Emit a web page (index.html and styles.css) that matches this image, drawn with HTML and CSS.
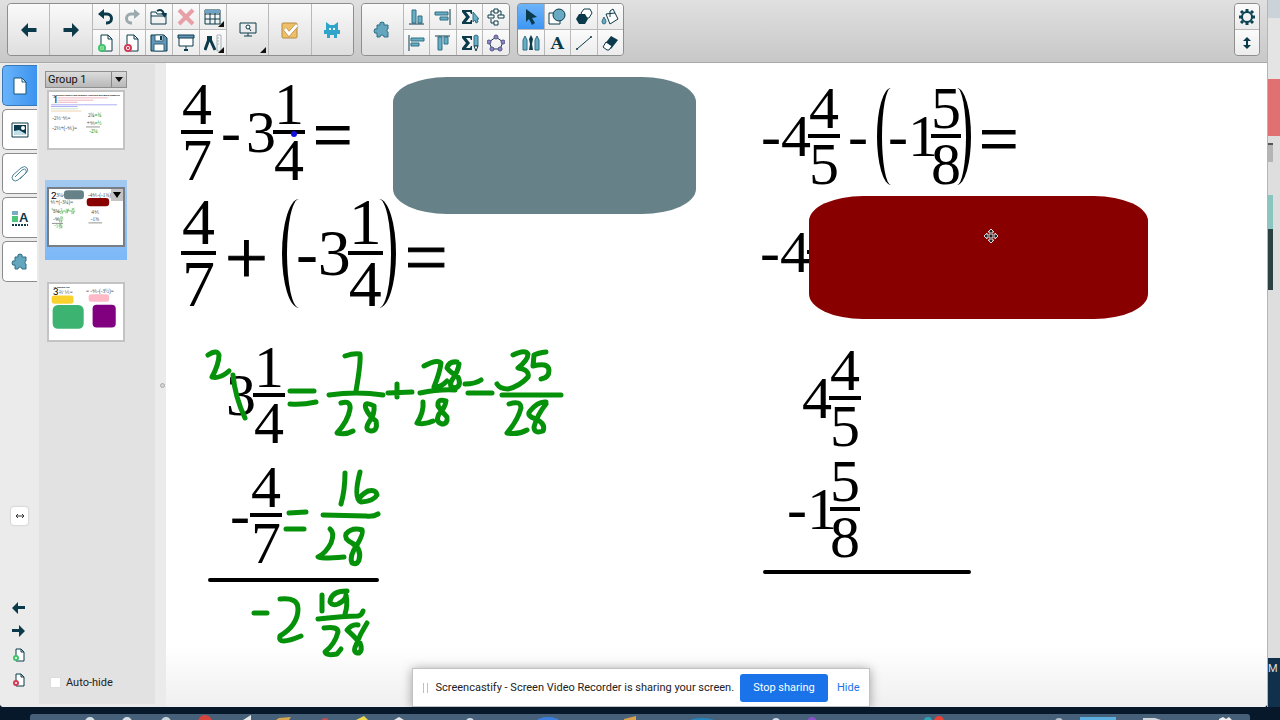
FILE: index.html
```html
<!doctype html>
<html lang="en">
<head>
  <meta charset="utf-8">
  <title>Mixed numbers</title>
  <link rel="stylesheet" href="styles.css">
</head>
<body>
<div class="window">

	<header class="toolbar">
		<div class="tools tools-main">
			<button class="tool tall" aria-label="Previous page"><svg width="18" height="16" viewBox="0 0 18 16"><path class="dark" d="M1 8l7-7v5h8.500v4H8v5z"/></svg></button>
			<button class="tool tall" aria-label="Next page"><svg width="18" height="16" viewBox="0 0 18 16"><path class="dark" d="M17 8l-7-7v5H1.500v4H10v5z"/></svg></button>
			<button class="tool" aria-label="Undo"><svg width="18" height="18" viewBox="0 0 18 18"><path d="M6 6h4a4 4 0 0 1 0 9H9" fill="none" stroke="#0b3a4a" stroke-width="3"/><path class="dark" d="M1 6l6-5v10z"/></svg></button>
			<button class="tool" aria-label="Redo"><svg width="18" height="18" viewBox="0 0 18 18"><path d="M12 6H8a4 4 0 0 0 0 9h1" fill="none" stroke="#9aa9ad" stroke-width="3"/><path d="M17 6l-6-5v10z" fill="#9aa9ad"/></svg></button>
			<button class="tool" aria-label="Open"><svg width="18" height="18" viewBox="0 0 18 18"><path class="line" d="M1 16V4h5l1 2h9v10zM1 8h13"/><path d="M7 3q5-3 7 3" fill="none" stroke="#0b3a4a" stroke-width="2"/><path class="dark" d="M11 5h6l-2 5z"/></svg></button>
			<button class="tool" aria-label="Delete"><svg width="18" height="18" viewBox="0 0 18 18"><path d="M2 2l14 14M16 2L2 16" stroke="#e8a0a8" stroke-width="4"/></svg></button>
			<button class="tool more" aria-label="Table"><svg width="18" height="18" viewBox="0 0 18 18"><path class="line" d="M1 2h15v14H1zM1 6h15M1 11h15M6 2v14M11 2v14"/><path d="M1 2h15v3H1z" fill="#6fa3c8"/></svg></button>
			<button class="tool tall more" aria-label="Display"><svg width="18" height="16" viewBox="0 0 18 16"><path class="line" d="M1 1h16v10H1zM9 11v3M5 14h8"/><circle cx="9" cy="5" r="2" fill="#fff" stroke="#0b3a4a"/><path class="line" d="M10 6l2 3"/></svg></button>
			<button class="tool tall" aria-label="Response"><svg width="18" height="18" viewBox="0 0 18 18"><rect x="1" y="2" width="15" height="15" rx="1" fill="#edbf68" stroke="#b78c42"/><path d="M4 8l4 5 8-9" fill="none" stroke="#a67b36" stroke-width="4"/><path d="M4 8l4 5 8-9" fill="none" stroke="#fff" stroke-width="3"/></svg></button>
			<button class="tool tall" aria-label="Activity lab"><svg width="18" height="16" viewBox="0 0 18 16"><path fill="#31a5c9" d="M3 0l4 3h4l4-3v8h2v4h-3v4h-3v-3H7v3H4v-4H1V8h2z"/><path fill="#e6f6fa" d="M6 6h2v2H6zM10 6h2v2h-2z"/></svg></button>
			<button class="tool" aria-label="Add page"><svg width="16" height="18" viewBox="0 0 16 18"><path class="line white" d="M3 1h7l4 4v12H3zM10 1v4h4"/><circle cx="4" cy="14" r="3" fill="#fff" stroke="#3fc46a" stroke-width="2"/><path d="M4 12v4M2 14h4" stroke="#3fc46a"/></svg></button>
			<button class="tool" aria-label="Delete page"><svg width="16" height="18" viewBox="0 0 16 18"><path class="line white" d="M3 1h7l4 4v12H3zM10 1v4h4"/><circle cx="4" cy="14" r="3" fill="#fff" stroke="#d23a56" stroke-width="2"/><path d="M3 13l2 2M5 13l-2 2" stroke="#d23a56"/></svg></button>
			<button class="tool" aria-label="Save"><svg width="18" height="18" viewBox="0 0 18 18"><path d="M1 1h13l3 3v13H1z" fill="#6597b9" stroke="#0b3a4a"/><path d="M5 1h8v6H5zM4 10h10v7H4z" fill="#fff" stroke="#34627a"/><path class="dark" d="M10 2h2v4h-2z"/></svg></button>
			<button class="tool" aria-label="Screen shade"><svg width="18" height="18" viewBox="0 0 18 18"><path class="line white" d="M2 3h14v9H2zM9 12v4"/><path d="M1 1h16v3H1z" fill="#6597b9" stroke="#0b3a4a"/><path class="dark" d="M7 15h4v2H7z"/></svg></button>
			<button class="tool more" aria-label="Measurement tools"><svg width="18" height="18" viewBox="0 0 18 18"><path d="M1 16L5 5M11 16L6 5" stroke="#0b3a4a" stroke-width="3"/><path class="dark" d="M3 2h5v5H3z"/><path d="M13 1h4v16h-4zM13 4h2M13 7h2M13 10h2" fill="none" stroke="#a9b4b8"/></svg></button>
		</div>

		<div class="tools tools-math">
			<button class="tool tall" aria-label="Add-ons"><svg width="18" height="17" viewBox="0 0 18 17"><use href="#puzzle"/></svg></button>
			<button class="tool" aria-label="Align bottom"><svg width="18" height="18" viewBox="0 0 18 18"><path class="blue" d="M4 2h4v13H4zM10 8h4v7h-4z"/><path class="line" d="M1 16h15"/></svg></button>
			<button class="tool" aria-label="Align right"><svg width="18" height="18" viewBox="0 0 18 18"><path class="blue" d="M1 4h13v3H1zM6 9h8v3H6z"/><path class="line" d="M16 1v16"/></svg></button>
			<button class="tool" aria-label="Select equation"><svg width="18" height="18" viewBox="0 0 18 18"><use href="#sigma"/><path class="blue" d="M12 4v10l2-2 1 3 2-1-1-3h2z"/></svg></button>
			<button class="tool" aria-label="Concept map"><svg width="18" height="18" viewBox="0 0 18 18"><path class="line" d="M7 3H4v4M11 3h3v4M7 15H4v-4"/><path class="line white" d="M7 1h4v4H7zM1 7h6v3H1zM11 7h6v3h-6zM7 13h4v4H7z"/></svg></button>
			<button class="tool" aria-label="Align left"><svg width="18" height="18" viewBox="0 0 18 18"><path class="blue" d="M3 4h13v3H3zM3 9h8v3H3z"/><path class="line" d="M1 1v16"/></svg></button>
			<button class="tool" aria-label="Align top"><svg width="18" height="18" viewBox="0 0 18 18"><path class="blue" d="M4 3h4v13H4zM10 3h4v7h-4z"/><path class="line" d="M1 2h15"/></svg></button>
			<button class="tool" aria-label="Write equation"><svg width="18" height="18" viewBox="0 0 18 18"><use href="#sigma"/><path class="blue" d="M13 2q2-2 4 0v10h-4z"/><path class="line white" d="M13 12h4l-2 5z"/></svg></button>
			<button class="tool" aria-label="Polygon"><svg width="18" height="18" viewBox="0 0 18 18"><path class="line" d="M9 3l7 5-3 7H5L2 8z"/><g fill="#8d83bf" stroke="#5c5390"><circle cx="9" cy="3" r="2"/><circle cx="16" cy="8" r="2"/><circle cx="13" cy="15" r="2"/><circle cx="5" cy="15" r="2"/><circle cx="2" cy="8" r="2"/></g></svg></button>
		</div>

		<div class="tools tools-draw">
			<button class="tool selected" aria-label="Select"><svg width="18" height="18" viewBox="0 0 18 18"><path class="dark" d="M4 1l11 8-5 1 3 5-3 2-3-6-3 3z"/></svg></button>
			<button class="tool" aria-label="Shapes"><svg width="18" height="18" viewBox="0 0 18 18"><path class="line white" d="M1 5h11v11H1z"/><circle cx="11" cy="7" r="6" fill="#6aa9c4" stroke="#0b3a4a"/></svg></button>
			<button class="tool" aria-label="Regular polygons"><svg width="18" height="18" viewBox="0 0 18 18"><path class="line white" d="M9 1h6l2 4-3 5H9L6 5z"/><path class="dark" d="M4 6h6l3 5-3 5H4l-3-5z"/></svg></button>
			<button class="tool" aria-label="Fill"><svg width="18" height="18" viewBox="0 0 18 18"><path class="line white" d="M5 6l9-1 3 6-8 5z"/><path class="line" d="M9 9V3l3-2 2 4"/><path class="blue" d="M3 9l2 4q0 3-2 3t-2-3z"/></svg></button>
			<button class="tool" aria-label="Pens"><svg width="18" height="18" viewBox="0 0 18 18"><path class="blue" d="M1 6l2-4 2 4v10H1zM13 6l2-4 2 4v10h-4z"/><path class="dark" d="M7 5l2-4 2 4-1 5 1 6H7l1-6z"/></svg></button>
			<button class="tool letter" aria-label="Text">A</button>
			<button class="tool" aria-label="Line"><svg width="18" height="18" viewBox="0 0 18 18"><path class="line" d="M2 15L16 3"/><circle class="dark" cx="2" cy="15" r="1"/><circle class="dark" cx="16" cy="3" r="1"/></svg></button>
			<button class="tool" aria-label="Eraser"><svg width="18" height="18" viewBox="0 0 18 18"><path class="dark" d="M10 2l7 4-7 9-7-4z"/><path class="line white" d="M5 8l6 4-3 4H6l-4-3z"/></svg></button>
		</div>

		<div class="tools tools-end">
			<button class="tool" aria-label="Settings"><svg width="18" height="18" viewBox="0 0 18 18"><circle cx="9" cy="9" r="5" fill="none" stroke="#0c4454" stroke-width="2"/><path d="M9 1v3M9 14v3M1 9h3M14 9h3M3 3l2 2M13 13l2 2M15 3l-2 2M5 13l-2 2" stroke="#0c4454" stroke-width="3"/></svg></button>
			<button class="tool" aria-label="Move toolbar"><svg width="10" height="14" viewBox="0 0 10 14"><path class="dark" d="M5 1l4 4H6v4h3l-4 4-4-4h3V5H1z"/></svg></button>
		</div>
	</header>

	<div class="workspace">
		<nav class="rail">
			<button class="tab selected" aria-label="Page sorter"><svg width="14" height="18" viewBox="0 0 14 18"><path d="M1 1h8l4 4v12H1z" fill="#fff" stroke="#125777"/><path d="M9 1v4h4" fill="none" stroke="#125777"/></svg></button>
			<button class="tab" aria-label="Gallery"><svg width="18" height="18" viewBox="0 0 18 18"><path d="M1 2h16v14H1z" fill="#fff" stroke="#0b3a4a"/><path class="dark" d="M3 4h12v10H3z"/><path d="M3 10l5-1 7 4v1H3z" fill="#bfe0e8"/><circle cx="12" cy="7" r="2" fill="#fff"/></svg></button>
			<button class="tab" aria-label="Attachments"><svg width="18" height="18" viewBox="0 0 18 18"><path d="M4 12l7-7q3-2 4 0t-1 4l-7 6q-3 2-5 0t0-5l8-7q4-3 6 0 2 2-1 5l-6 6" fill="none" stroke="#4c8596"/></svg></button>
			<button class="tab" aria-label="Properties"><svg width="18" height="18" viewBox="0 0 18 18"><path fill="#79adc5" d="M1 2h6v4H1z"/><path fill="#4dc67c" d="M1 7h6v6H1z"/><text class="tab-letter" x="8" y="13">A</text><path d="M1 16h16" stroke="#0b3a4a" stroke-width="2" stroke-dasharray="2 1"/></svg></button>
			<button class="tab" aria-label="Add-ons"><svg width="18" height="17" viewBox="0 0 18 17"><use href="#puzzle"/></svg></button>
			<button class="collapse" aria-label="Resize"><svg width="10" height="6" viewBox="0 0 10 6"><path d="M2 3h6M3 1L1 3l2 2M7 1l2 2-2 2" fill="none" stroke="#333"/></svg></button>
			<div class="page-buttons">
				<button aria-label="Back"><svg width="14" height="12" viewBox="0 0 14 12"><path class="dark" d="M0 6l6-6v4h7v3H6v5z"/></svg></button>
				<button aria-label="Forward"><svg width="14" height="12" viewBox="0 0 14 12"><path class="dark" d="M13 6L7 0v4H0v3h7v5z"/></svg></button>
				<button aria-label="Insert page"><svg width="12" height="14" viewBox="0 0 12 14"><path class="line white" d="M3 1h5l3 3v9H3zM8 1v3h3"/><circle cx="3" cy="10" r="2" fill="#fff" stroke="#3fc46a" stroke-width="2"/></svg></button>
				<button aria-label="Remove page"><svg width="12" height="14" viewBox="0 0 12 14"><path class="line white" d="M3 1h5l3 3v9H3zM8 1v3h3"/><circle cx="3" cy="10" r="2" fill="#fff" stroke="#d23a56" stroke-width="2"/></svg></button>
			</div>
		</nav>

		<aside class="sorter">
			<div class="group-picker">
				<select id="group" aria-label="Group">
					<option>Group 1</option>
				</select>
			</div>

			<div class="page">
				<svg class="thumb" viewBox="0 0 1120 840">
					<text class="thumb-title" x="40" y="54">4.3 Turning Positive and Negative Fractions and Mixed Numbers</text>
					<g stroke-width="9">
						<path d="M130 85h760M130 120h540M130 152h300" stroke="#e48294"/>
						<path d="M30 190h1000M30 216h400" stroke="#7777ee"/>
						<path d="M30 250h410" stroke="#9fd6a5"/><path d="M30 284h460" stroke="#e3b27b"/>
					</g>
					<text class="thumb-math" x="50" y="420">-2⅓·⅘=</text>
					<text class="thumb-math" x="50" y="570">-2⅓+(-⅘)=</text>
					<text class="thumb-math" x="590" y="370">2¾</text>
					<text class="thumb-math" x="570" y="490">+⅘</text>
					<path d="M560 525h210" stroke="#333" stroke-width="8"/>
					<text class="thumb-ink" x="690" y="370">=¾</text>
					<text class="thumb-ink" x="690" y="490">=½</text>
					<text class="thumb-ink" x="610" y="615">-2¼</text>
					<text class="thumb-number" x="56" y="170">1</text>
				</svg>
			</div>

			<div class="page current">
				<svg class="thumb" viewBox="0 0 1120 840">
					<text class="thumb-math" x="110" y="110">3¼=</text>
					<text class="thumb-math" x="20" y="225">⅘+(-3¼)=</text>
					<rect x="227" y="14" width="302" height="137" rx="50" fill="#668288"/>
					<text class="thumb-math" x="590" y="110">-4⅘-(-1⅝)=</text>
					<rect x="571" y="134" width="340" height="123" rx="50" fill="#880000"/>
					<use href="#strokes"/>
					<text class="thumb-math" x="62" y="360">3¼</text>
					<text class="thumb-math" x="62" y="480">-⅘</text>
					<text class="thumb-math" x="640" y="370">4⅘</text>
					<text class="thumb-math" x="630" y="485">-1⅝</text>
					<path d="M43 517h170M597 509h207" stroke="#333" stroke-width="8"/>
					<text class="thumb-number" x="30" y="150">2</text>
				</svg>
				<button class="page-menu" aria-label="Page menu"><svg width="8" height="6" viewBox="0 0 8 6"><path d="M0 0h8L4 6z"/></svg></button>
			</div>

			<div class="page">
				<svg class="thumb" viewBox="0 0 1120 840">
					<text class="thumb-title" x="60" y="54">4.3 Turning Pos.</text>
					<text class="thumb-math" x="150" y="140">⅔·⅕=</text>
					<text class="thumb-math" x="560" y="130">= -⅘-(-3½)=</text>
					<rect x="40" y="170" width="330" height="125" rx="36" fill="#f9d22f"/>
					<rect x="600" y="150" width="310" height="115" rx="36" fill="#ffb9c7"/>
					<rect x="55" y="315" width="470" height="360" rx="80" fill="#3cb371"/>
					<rect x="660" y="310" width="350" height="345" rx="60" fill="#800080"/>
					<text class="thumb-number" x="60" y="170">3</text>
				</svg>
			</div>

			<label class="auto-hide"><input type="checkbox"> Auto-hide</label>
		</aside>

		<div class="splitter"><span class="grip"></span></div>

		<main class="canvas">
			<div class="eq first-problem">
				<span class="frac"><span>4</span><span>7</span></span>
				<span class="minus">-</span>
				<span>3</span><span class="frac mixed"><span>1</span><span>4</span></span>
				<span class="op">=</span>
			</div>

			<div class="eq big first-rewrite">
				<span class="frac"><span>4</span><span>7</span></span>
				<span class="op">+</span>
				<span class="paren open"></span><span>-3</span><span class="frac mixed"><span>1</span><span>4</span></span><span class="paren close"></span>
				<span class="op">=</span>
			</div>

			<div class="eq first-top"><span>3</span><span class="frac mixed"><span>1</span><span>4</span></span></div>
			<div class="eq first-bottom"><span>-</span><span class="frac"><span>4</span><span>7</span></span></div>
			<div class="sum-line first-line"></div>

			<div class="eq second-problem">
				<span>-4</span><span class="frac mixed"><span>4</span><span>5</span></span>
				<span class="minus">-</span>
				<span class="paren open"></span><span>-1</span><span class="frac after-one"><span>5</span><span>8</span></span><span class="paren close"></span>
				<span class="op">=</span>
			</div>

			<div class="eq second-rewrite"><span>-4</span><span class="frac mixed"><span>4</span><span>5</span></span></div>
			<div class="eq second-top"><span>4</span><span class="frac mixed"><span>4</span><span>5</span></span></div>
			<div class="eq second-bottom"><span>-1</span><span class="frac after-one"><span>5</span><span>8</span></span></div>
			<div class="sum-line second-line"></div>

			<div class="cover cover-gray"></div>
			<div class="cover cover-red"></div>

			<svg class="ink">
				<g id="strokes" transform="translate(-166 -63)">
					<circle class="dot" cx="294" cy="134" r="3"/>
					<!-- borrow -->
					<path d="M208 355Q217 349 219 355Q219 364 212 377Q220 379 229 371M233 375Q235 397 245 418"/>
					<path d="M290 391H314M290 404Q302 405 316 402"/>
					<!-- 7/28 -->
					<path d="M345 356Q354 353 360 354Q361 362 356 391M329 395Q357 391 383 395"/>
					<path d="M341 403Q351 400 350 409Q348 421 337 433Q346 435 353 431M374 406Q363 400 366 409Q369 416 376 421Q378 431 371 431Q364 430 369 422Q375 414 374 406"/>
					<path d="M388 393L412 392M397 384V397"/>
					<!-- 28/28 -->
					<path d="M424 366Q437 359 441 363Q440 372 434 387Q440 388 447 381M457 362Q449 361 447 368Q450 372 458 377Q462 386 455 388Q448 387 452 380Q458 372 459 364M420 393Q440 389 455 390"/>
					<path d="M423 402Q424 412 417 423Q425 425 433 421M446 401Q437 398 438 406Q442 412 447 417Q448 424 442 424Q435 422 439 414Q445 408 446 401"/>
					<path d="M465 384Q475 384 481 380M468 393H492"/>
					<!-- 35/28 -->
					<path d="M513 355Q525 349 528 354Q528 360 518 368Q530 370 528 377Q520 386 508 389Q500 389 497 384M546 352Q538 353 534 355L533 366Q548 362 549 370Q549 378 541 379M502 395H561"/>
					<path d="M509 404Q521 400 521 408Q518 420 507 433Q518 435 527 430M546 402Q538 401 530 411Q526 416 536 419Q546 424 543 431Q534 434 534 427Q537 415 546 404"/>
					<!-- 16/28 -->
					<path d="M289 513L306 512M286 529H304"/>
					<path d="M345 473Q345 490 341 504M360 472Q353 499 361 502Q374 501 377 495Q376 489 368 491Q361 495 359 499M323 515L366 516Q373 517 378 514"/>
					<path d="M330 529Q335 533 331 543Q326 553 318 557Q319 559 344 557M362 530Q352 527 346 534Q344 539 352 543Q362 549 359 560Q357 565 352 563Q349 556 357 545Q364 533 362 530"/>
					<!-- answer -->
					<path d="M254 613H267M280 599Q298 597 298 609Q298 625 280 636Q277 646 301 636"/>
					<path d="M322 595V611M347 591Q331 591 330 602Q332 606 338 604Q346 600 346 595Q348 605 345 614M318 619Q345 616 358 616Q362 615 363 611"/>
					<path d="M324 628Q338 626 338 632Q335 644 325 652Q326 656 337 654L341 649M367 623Q360 634 356 645Q352 653 359 653Q363 650 360 643Q352 634 347 630Q352 624 358 625"/>
				</g>
			</svg>

			<svg class="pointer" width="16" height="16" viewBox="0 0 16 16"><path d="M8 1l3 3H9v3h3V5l3 3-3 3V9H9v3h2l-3 3-3-3h2V9H4v2L1 8l3-3v2h3V4H5z" fill="#222" stroke="#ddd"/></svg>
		</main>
	</div>

	<div class="share-bar">
		<span class="drag"></span>
		<span class="share-text">Screencastify - Screen Video Recorder is sharing your screen.</span>
		<button class="stop">Stop sharing</button>
		<a class="hide" href="#">Hide</a>
	</div>
</div>

<div class="behind">
	<span class="behind-title"></span>
	<span class="behind-bar"></span>
	<span class="behind-red"></span>
	<span class="behind-gap"></span>
	<span class="behind-scroll"></span>
	<span class="behind-gap tall-gap"></span>
	<span class="behind-teal"></span>
	<span class="behind-dark"></span>
	<span class="behind-page"></span>
	<span class="behind-desktop">M</span>
</div>

<div class="dock">
	<svg width="100%" height="6">
		<circle cx="60" cy="8" r="5" fill="#d7dfe6"/><circle cx="97" cy="8" r="5" fill="#d7dfe6"/><circle cx="136" cy="8" r="5" fill="#c9d3da"/>
		<circle cx="175" cy="8" r="7" fill="#d6443c"/><path d="M213 6l8-5v5z" fill="#e8e8e8"/><path d="M246 6l3-2 12-1-2 3z" fill="#d8a64c"/>
		<circle cx="295" cy="8" r="4" fill="#c24d58"/><path d="M326 6l8-4 4 4z" fill="#f0d84c"/><path d="M364 6l5-3 5 3z" fill="#e8e8e8"/>
		<circle cx="440" cy="8" r="4" fill="#d7dfe6"/><ellipse cx="518" cy="8" rx="12" ry="5" fill="#3d7fe0"/><path d="M594 5l12-3v4h-12z" fill="#d9a24b"/>
		<ellipse cx="672" cy="8" rx="14" ry="4" fill="#2386c0"/><circle cx="746" cy="8" r="4" fill="#d7dfe6"/><circle cx="782" cy="8" r="5" fill="#8a52c8"/>
		<circle cx="898" cy="7" r="4" fill="#2aa5b8"/><circle cx="909" cy="7" r="5" fill="#ea4336"/><circle cx="1029" cy="8" r="4" fill="#b9c4cc"/>
		<rect x="1050" y="3" width="36" height="3" fill="#5bafdf"/><path d="M1113 4h12l6 2h-18z" fill="#d0d6da"/><path d="M1189 5l4-2 3 2 3-2 3 3h-13z" fill="#f0f0f0"/>
	</svg>
</div>

<svg class="symbols">
	<symbol id="puzzle" viewBox="0 0 18 17"><path d="M7 4q-1-3 2-3t2 3h4v4q-1 0-1 1.500T15 11v5h-4q0-2-2-2t-2 2H4v-4q-3 1-3-2t3-2V4z" fill="#63a6be" stroke="#2f6f86"/></symbol>
	<symbol id="sigma" viewBox="0 0 18 18"><path d="M1 2h10v4h-1l-1-2H5l4 5-4 5h4l1-2h1v4H1v-2l4-5-4-5z" fill="#0b3a4a"/></symbol>
</svg>
</body>
</html>
```

FILE: styles.css
```css
*,
*:before,
*:after {
	box-sizing: border-box;
}

body {
	display: grid;
	grid-template-columns: 1fr 13px;
	grid-template-rows: 1fr 13px;
	height: 100vh;
	margin: 0;
	overflow: hidden;
	background: #06182a;
	font-family: Roboto, "Liberation Sans", sans-serif;
	font-size: 11px;
	color: #222;
}

button {
	padding: 0;
	border: none;
	background: none;
	font-family: inherit;
	font-size: inherit;
}

svg {
	display: block;
}

.symbols {
	position: absolute;
	width: 0;
	height: 0;
}

.dark { fill: #0b3a4a; }
.blue { fill: #6aaec6; stroke: #2f6f86; }
.line { fill: none; stroke: #0b3a4a; }
.white { fill: #fff; }

.window {
	position: relative;
	display: flex;
	flex-direction: column;
	min-width: 0;
	min-height: 0;
	background: #fff;
	border-radius: 0 0 4px 4px;
	overflow: hidden;
}

/* toolbar */

.toolbar {
	display: flex;
	gap: 7px;
	align-items: flex-start;
	height: 63px;
	padding: 3px 7px 0 7px;
	border-bottom: 1px solid #a9a9a9;
	background: linear-gradient(#e0e0e0, #c8c8c8);
}

.tools {
	display: grid;
	grid-template-rows: 25px 25px;
	gap: 1px;
	border: 1px solid #8e8e8e;
	border-radius: 4px;
	background: #b9b9b9;
	overflow: hidden;
}

.tools-main {
	width: 347px;
	grid-template-columns: 8fr 8fr 5fr 5fr 5fr 5fr 5fr 8fr 8fr 8fr;
}

.tools-math {
	width: 149px;
	grid-template-columns: 8fr 5fr 5fr 5fr 5fr;
}

.tools-draw {
	width: 107px;
	grid-template-columns: repeat(4, 1fr);
}

.tools-end {
	width: 26px;
	margin-left: auto;
}

.tool {
	position: relative;
	display: flex;
	align-items: center;
	justify-content: center;
	min-width: 0;
	background: linear-gradient(#fbfbfb, #ececec);
}

.tall {
	grid-row: span 2;
	background: linear-gradient(#fafafa, #dedede);
}

.tool.selected {
	background: linear-gradient(#6db4fa, #3d96f3);
}

.more:after {
	content: "";
	position: absolute;
	right: 2px;
	bottom: 2px;
	border-left: 6px solid transparent;
	border-bottom: 6px solid #111;
}

.letter {
	font-family: "DejaVu Serif", serif;
	font-size: 17px;
	font-weight: bold;
	color: #0b3a4a;
}

/* left side */

.workspace {
	flex: 1;
	display: flex;
	min-height: 0;
	background: #ebebeb;
}

.rail {
	display: flex;
	flex-direction: column;
	align-items: flex-end;
	gap: 3px;
	width: 37px;
	padding-top: 2px;
}

.tab {
	display: flex;
	align-items: center;
	justify-content: center;
	width: 35px;
	height: 41px;
	border: 1px solid #8b8b8b;
	border-right: none;
	border-radius: 5px 0 0 5px;
	background: #fff;
}

.tab.selected {
	border-color: #3678b8;
	background: linear-gradient(90deg, #69b3fb, #3c93ee);
}

.tab-letter {
	font-family: "Liberation Sans", sans-serif;
	font-size: 13px;
	font-weight: bold;
	fill: #0b3a4a;
}

.collapse {
	display: flex;
	align-items: center;
	justify-content: center;
	width: 17px;
	height: 18px;
	margin: auto 9px 0 0;
	border-radius: 3px;
	background: #fff;
	box-shadow: 0 0 2px #aaa;
}

.page-buttons {
	display: flex;
	flex-direction: column;
	align-items: center;
	gap: 11px;
	width: 37px;
	margin: 74px 0 20px;
}

.sorter {
	display: flex;
	flex-direction: column;
	align-items: flex-start;
	width: 116px;
	margin: 1px 0 3px 2px;
	padding: 7px 6px 15px;
	background: #e2e2e2;
}

.group-picker {
	position: relative;
	width: 82px;
}

.group-picker:after {
	content: "";
	position: absolute;
	top: 6px;
	right: 4px;
	border: 4px solid transparent;
	border-top: 5px solid #111;
	border-bottom: none;
	pointer-events: none;
}

select {
	display: block;
	width: 100%;
	height: 17px;
	padding: 0 2px;
	border: 1px solid #8f8f8f;
	border-radius: 0;
	appearance: none;
	background: linear-gradient(90deg, transparent 65px, #888 65px, #888 66px, transparent 66px), linear-gradient(#dcdcdc, #b8b8b8);
	font-family: inherit;
	font-size: 11px;
	color: #111;
}

.page {
	position: relative;
	width: 82px;
	padding: 2px;
}

.thumb {
	width: 78px;
	height: 60px;
	border: 2px solid #c3c3c3;
	background: #fff;
}

.current {
	height: 80px;
	margin: 28px 0 20px;
	padding-top: 7px;
	background: linear-gradient(#a3c9f0, #7db8f8);
}

.current .thumb {
	border-color: #787e86;
}

.page-menu {
	position: absolute;
	top: 9px;
	right: 4px;
	display: flex;
	align-items: center;
	justify-content: center;
	width: 12px;
	height: 12px;
	background: #c4c4c4;
}

.thumb-title {
	font-family: "Liberation Sans", sans-serif;
	font-size: 34px;
	font-weight: bold;
}

.thumb-math,
.thumb-ink {
	font-family: "Liberation Serif", "DejaVu Serif", serif;
	font-size: 80px;
	fill: #444;
}

.thumb-ink {
	font-weight: bold;
	fill: #1fa32f;
}

.thumb-number {
	font-family: Roboto, sans-serif;
	font-size: 150px;
}

.auto-hide {
	display: flex;
	align-items: center;
	gap: 5px;
	margin-top: auto;
	padding-left: 5px;
}

.auto-hide input {
	width: 11px;
	height: 11px;
	margin: 0;
	border: 1px solid #ddd;
	appearance: none;
	background: #fff;
}

.splitter {
	display: flex;
	align-items: center;
	justify-content: flex-end;
	width: 11px;
	padding-right: 1px;
}

.grip {
	width: 5px;
	height: 5px;
	border: 1px solid #aaa;
	border-radius: 50%;
	background: #d5d5d5;
}

/* whiteboard page */

.canvas {
	position: relative;
	flex: 1;
	min-width: 0;
	overflow: hidden;
	background: linear-gradient(#fff, #fff calc(100% - 60px), #efefef);
}

.eq {
	position: absolute;
	display: flex;
	align-items: center;
	font-family: "Liberation Serif", "Times New Roman", serif;
	font-size: 60px;
	line-height: 52px;
	color: #000;
	white-space: nowrap;
}

.big {
	font-size: 66px;
	line-height: 58px;
}

.frac {
	display: flex;
	flex-direction: column;
	text-align: center;
}

.frac span {
	padding: 0 1px;
}

.frac span:first-child {
	border-bottom: 4px solid #000;
}

.mixed {
	margin-left: -3px;
}

.after-one {
	margin-left: -7px;
}

.after-one span {
	padding: 0;
}

.minus {
	margin: 0 5px 0 8px;
}

.op {
	margin-left: 8px;
	padding-top: 8px;
	font-size: 70px;
	-webkit-text-stroke: 1px #000;
}

.big .op {
	margin-left: 9px;
	font-size: 76px;
}

.paren {
	align-self: stretch;
	width: 14px;
	margin: 6px 0 5px;
	border: 0 solid #000;
}

.open {
	margin-left: 4px;
	margin-right: -3px;
	border-left-width: 5px;
	border-radius: 100% 0 0 100% / 50% 0 0 50%;
}

.close {
	margin-left: -4px;
	border-right-width: 5px;
	border-radius: 0 100% 100% 0 / 0 50% 50% 0;
}

.big .paren {
	width: 17px;
}

.big .open {
	margin-left: 14px;
}

.first-problem { left: 15px; top: 15px; }
.first-rewrite { left: 15px; top: 130px; }
.first-top { left: 60px; top: 278px; }
.first-bottom { left: 64px; top: 398px; }
.second-problem { left: 595px; top: 19px; }
.second-rewrite { left: 594px; top: 135px; }
.second-top { left: 636px; top: 281px; }
.second-bottom { left: 621px; top: 392px; }

.sum-line {
	position: absolute;
	height: 4px;
	border-radius: 2px;
	background: #000;
}

.first-line {
	left: 42px;
	top: 515px;
	width: 171px;
}

.second-line {
	left: 597px;
	top: 507px;
	width: 208px;
}

.cover {
	position: absolute;
	border-radius: 54px / 25px;
}

.cover-gray {
	left: 227px;
	top: 14px;
	width: 303px;
	height: 137px;
	background: #668288;
}

.cover-red {
	left: 643px;
	top: 133px;
	width: 339px;
	height: 123px;
	background: #880000;
}

.ink {
	position: absolute;
	inset: 0;
	width: 100%;
	height: 100%;
}

.ink path {
	fill: none;
	stroke: #06910a;
	stroke-width: 5px;
	stroke-linecap: round;
	stroke-linejoin: round;
}

.dot {
	fill: #1010e0;
}

.pointer {
	position: absolute;
	left: 817px;
	top: 165px;
}

/* screen sharing notice */

.share-bar {
	position: absolute;
	bottom: 0;
	left: 50%;
	display: flex;
	align-items: center;
	width: 458px;
	height: 39px;
	padding: 0 9px 0 10px;
	border: 1px solid #c2c2c2;
	background: #fff;
	box-shadow: 0 1px 10px rgba(0,0,0,0.35);
	transform: translateX(-222px);
}

.drag {
	width: 5px;
	height: 10px;
	margin-right: 8px;
	border: 1px solid #c0c0c0;
	border-width: 0 1px;
}

.share-text {
	white-space: nowrap;
}

.stop {
	width: 88px;
	height: 28px;
	margin-left: auto;
	border-radius: 3px;
	background: #1a73e8;
	color: #fff;
}

.hide {
	margin-left: 9px;
	color: #1a73e8;
	text-decoration: none;
}

/* what shows behind the window */

.behind {
	display: flex;
	flex-direction: column;
	min-height: 0;
	overflow: hidden;
	border-left: 1px solid #b5b5b5;
	background: #dedede;
}

.behind-title { height: 18px; background: #ccd3d8; }
.behind-bar { height: 61px; background: #e4e4e4; }
.behind-red { height: 57px; background: #e07072; }
.behind-gap { height: 7px; }
.behind-scroll { height: 19px; margin-right: 7px; border-top: 2px solid #555; background: #b5b5b5; }
.tall-gap { height: 33px; }
.behind-teal { height: 34px; margin-right: 7px; background: #8cc5c0; }
.behind-dark { height: 61px; margin-right: 7px; background: #2c4142; }
.behind-page { flex: 1; }
.behind-desktop { height: 49px; padding-top: 4px; background: #10304c; color: #ddd; }

.dock {
	grid-column: 1 / 3;
	margin: 7px 30px 0;
	border-radius: 3px 3px 0 0;
	background: #456078;
}
```
